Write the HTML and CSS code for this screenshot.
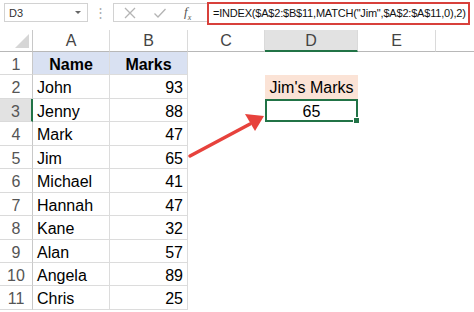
FILE: index.html
```html
<!DOCTYPE html>
<html>
<head>
<meta charset="utf-8">
<link rel="stylesheet" href="styles.css">
</head>
<body>
<div class="app">
  <div class="fbar">
    <div class="namebox"><span class="ref">D3</span><span class="caret"></span></div>
    <div class="dots">⋮</div>
    <div class="fxbox">
      <svg class="ico" width="14" height="14" viewBox="0 0 14 14"><path d="M2 2 L12 12 M12 2 L2 12" stroke="#b4b4b4" stroke-width="1.3" fill="none"/></svg>
      <svg class="ico" width="14" height="14" viewBox="0 0 14 14"><path d="M1.5 7.5 L5 11 L12.5 3" stroke="#b4b4b4" stroke-width="1.3" fill="none"/></svg>
      <span class="fx">f<sub>x</sub></span>
    </div>
    <div class="formula">=INDEX($A$2:$B$11,MATCH("Jim",$A$2:$A$11,0),2)</div>
  </div>
  <div class="sheet">
    <div class="corner"><span class="tri"></span></div>
    <div class="ch">A</div><div class="ch">B</div><div class="ch">C</div><div class="ch sel">D</div><div class="ch">E</div><div class="ch last"></div>

    <div class="rh">1</div><div class="c a hd">Name</div><div class="c b hd">Marks</div><div class="e"></div><div class="e"></div><div class="e"></div><div class="e"></div>
    <div class="rh">2</div><div class="c a">John</div><div class="c b">93</div><div class="e"></div><div class="e peach">Jim's Marks</div><div class="e"></div><div class="e"></div>
    <div class="rh rsel">3</div><div class="c a">Jenny</div><div class="c b">88</div><div class="e"></div><div class="e active">65<span class="handle"></span></div><div class="e"></div><div class="e"></div>
    <div class="rh">4</div><div class="c a">Mark</div><div class="c b">47</div><div class="e"></div><div class="e"></div><div class="e"></div><div class="e"></div>
    <div class="rh">5</div><div class="c a">Jim</div><div class="c b">65</div><div class="e"></div><div class="e"></div><div class="e"></div><div class="e"></div>
    <div class="rh">6</div><div class="c a">Michael</div><div class="c b">41</div><div class="e"></div><div class="e"></div><div class="e"></div><div class="e"></div>
    <div class="rh">7</div><div class="c a">Hannah</div><div class="c b">47</div><div class="e"></div><div class="e"></div><div class="e"></div><div class="e"></div>
    <div class="rh">8</div><div class="c a">Kane</div><div class="c b">32</div><div class="e"></div><div class="e"></div><div class="e"></div><div class="e"></div>
    <div class="rh">9</div><div class="c a">Alan</div><div class="c b">57</div><div class="e"></div><div class="e"></div><div class="e"></div><div class="e"></div>
    <div class="rh">10</div><div class="c a">Angela</div><div class="c b">89</div><div class="e"></div><div class="e"></div><div class="e"></div><div class="e"></div>
    <div class="rh">11</div><div class="c a">Chris</div><div class="c b">25</div><div class="e"></div><div class="e"></div><div class="e"></div><div class="e"></div>
  </div>
  <svg class="arrow" width="474" height="312" viewBox="0 0 474 312">
    <line x1="190" y1="156" x2="250" y2="124" stroke="#e7423c" stroke-width="3.5" stroke-linecap="round"/>
    <polygon points="264,116 255,131 245,114" fill="#e7423c"/>
  </svg>
</div>
</body>
</html>
```
FILE: styles.css
```css
html, body {
  margin: 0;
  padding: 0;
  background: #ffffff;
}
.app {
  position: relative;
  width: 474px;
  height: 312px;
  overflow: hidden;
  font-family: "Liberation Sans", Arial, sans-serif;
  color: #000;
}
.fbar {
  height: 30px;
  display: flex;
  align-items: flex-start;
  padding-top: 2px;
  box-sizing: border-box;
}
.namebox {
  margin-left: 4px;
  margin-top: 1px;
  width: 84px;
  height: 19px;
  box-sizing: border-box;
  border: 1px solid #d2d2d2;
  display: flex;
  align-items: center;
  justify-content: space-between;
  padding: 0 6px 0 4px;
  font-size: 11px;
  color: #333;
}
.caret {
  width: 0;
  height: 0;
  border-left: 3px solid transparent;
  border-right: 3px solid transparent;
  border-top: 3px solid #666;
}
.dots {
  width: 25px;
  text-align: center;
  color: #aaa;
  font-size: 13px;
  line-height: 22px;
}
.fxbox {
  margin-top: 1px;
  width: 94px;
  height: 19px;
  box-sizing: border-box;
  border: 1px solid #d2d2d2;
  border-right: none;
  display: flex;
  align-items: center;
  gap: 16px;
  padding-left: 9px;
}
.fx {
  font-family: "Liberation Serif", serif;
  font-style: italic;
  font-size: 13px;
  color: #555;
  margin-left: 1px;
}
.fx sub {
  font-size: 8px;
}
.formula {
  width: 263px;
  height: 23px;
  box-sizing: border-box;
  border: 2px solid #d8403b;
  font-size: 11px;
  letter-spacing: -0.2px;
  line-height: 19px;
  padding-left: 4px;
  white-space: nowrap;
  color: #111;
}
.sheet {
  display: grid;
  grid-template-columns: 33px 77px 78px 77px 93px 78px 1fr;
  grid-template-rows: 22px repeat(11, 23.45px);
  font-size: 16px;
}
.corner {
  border-right: 1px solid #c8c8c8;
  border-bottom: 1px solid #b8b8b8;
  position: relative;
}
.tri {
  position: absolute;
  right: 3px;
  bottom: 3px;
  width: 0;
  height: 0;
  border-left: 14px solid transparent;
  border-bottom: 14px solid #d6d6d6;
}
.ch {
  box-sizing: border-box;
  border-right: 1px solid #dadada;
  border-bottom: 1px solid #b8b8b8;
  text-align: center;
  color: #444;
  line-height: 22px;
}
.ch.sel {
  background: #e2e2e2;
  border-bottom: 2px solid #217346;
}
.ch.last {
  border-right: none;
}
.rh {
  box-sizing: border-box;
  border-right: 1px solid #c8c8c8;
  border-bottom: 1px solid #dadada;
  text-align: center;
  color: #555;
  line-height: 21px;
  padding-top: 2px;
}
.rh.rsel {
  background: #e2e2e2;
  border-right: 2px solid #217346;
}
.c {
  box-sizing: border-box;
  border-right: 1px solid #dcdcdc;
  border-bottom: 1px solid #dcdcdc;
  line-height: 21px;
  padding-top: 2px;
  white-space: nowrap;
}
.c.a {
  padding-left: 4px;
}
.c.b {
  text-align: right;
  padding-right: 4px;
}
.c.hd {
  background: #d9e1f2;
  font-weight: bold;
  text-align: center;
  padding-left: 0;
  padding-right: 0;
}
.e {
  box-sizing: border-box;
  line-height: 21px;
  padding-top: 2px;
  text-align: center;
  white-space: nowrap;
}
.peach {
  background: #fbe3d6;
}
.active {
  position: relative;
  border: 2px solid #217346;
  line-height: 19px;
  padding-top: 1px;
}
.handle {
  position: absolute;
  right: -4px;
  bottom: -4px;
  width: 5px;
  height: 5px;
  background: #217346;
  border: 1px solid #fff;
}
.arrow {
  position: absolute;
  left: 0;
  top: 0;
  pointer-events: none;
}
```
